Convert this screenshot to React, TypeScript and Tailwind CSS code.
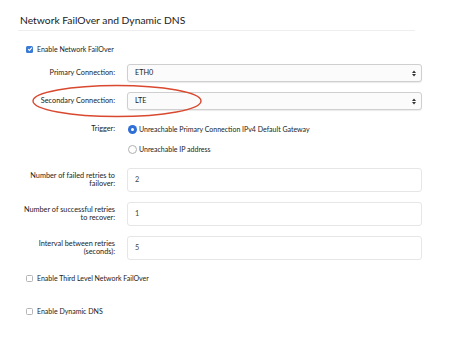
import React from "react";

const font = { fontFamily: "Lato, 'Noto Sans', sans-serif" };

const Checkbox = ({ checked, label }: { checked?: boolean; label: string }) => (
  <div className="flex items-center h-[10px] pl-[26px] gap-[4px]">
    {checked ? (
      <div className="w-[7px] h-[7px] rounded-[1.5px] bg-[#3a7bd5] flex items-center justify-center">
        <svg width="6" height="6" viewBox="0 0 10 10">
          <path d="M2 5.2 L4.2 7.3 L8 2.8" fill="none" stroke="white" strokeWidth="1.8" />
        </svg>
      </div>
    ) : (
      <div className="w-[7px] h-[7px] rounded-[1.5px] border border-[#b5b5b5] bg-white" />
    )}
    <span className="text-[7px] text-[#222]">{label}</span>
  </div>
);

const Label = ({ lines }: { lines: string[] }) => (
  <div className="w-[115px] text-right text-[7.3px] leading-[8.5px] text-[#222] shrink-0">
    {lines.map((l) => (
      <div key={l}>{l}</div>
    ))}
  </div>
);

const SelectRow = ({ label, value }: { label: string; value: string }) => (
  <div className="flex items-center gap-[12px] h-[18px] mt-[10px]">
    <Label lines={[label]} />
    <div className="w-[295px] h-[18px] border border-[#cfcfcf] rounded-[3px] bg-[#fbfbfb] shadow-[0_1px_1px_rgba(0,0,0,0.08)] flex items-center justify-between pl-[7px] pr-[5px]">
      <span className="text-[7.3px] text-[#222]">{value}</span>
      <svg width="4" height="7" viewBox="0 0 4 7">
        <path d="M0 3 L2 0.5 L4 3 Z M0 4 L2 6.5 L4 4 Z" fill="#333" />
      </svg>
    </div>
  </div>
);

const InputRow = ({ lines, value, mt }: { lines: string[]; value: string; mt: string }) => (
  <div className={`flex items-center gap-[12px] h-[24px] ${mt}`}>
    <Label lines={lines} />
    <div className="w-[295px] h-[24px] border border-[#e6e6e6] rounded-[3px] bg-white flex items-center pl-[7px]">
      <span className="text-[7.3px] text-[#444]">{value}</span>
    </div>
  </div>
);

const Radio = ({ checked, label }: { checked?: boolean; label: string }) => (
  <div className="flex items-center gap-[2px] h-[12px]">
    {checked ? (
      <div className="w-[9px] h-[9px] rounded-full bg-[#2f6fd6] flex items-center justify-center">
        <div className="w-[3px] h-[3px] rounded-full bg-white" />
      </div>
    ) : (
      <div className="w-[9px] h-[9px] rounded-full border border-[#b0b0b0] bg-white" />
    )}
    <span className="text-[7px] text-[#222]">{label}</span>
  </div>
);

export default function App() {
  return (
    <div className="relative w-[474px] h-[343px] bg-white overflow-hidden" style={font}>
      {/* Header */}
      <div className="ml-[18px] w-[397px] border-b border-[#eeeeee] pt-[13px] pb-[3px]">
        <div className="pl-[2px] text-[10.3px] leading-[14px] text-[#1a1a1a]">
          Network FailOver and Dynamic DNS
        </div>
      </div>

      <div className="mt-[13px]">
        <Checkbox checked label="Enable Network FailOver" />
      </div>

      <SelectRow label="Primary Connection:" value="ETH0" />
      <SelectRow label="Secondary Connection:" value="LTE" />

      {/* Trigger */}
      <div className="flex gap-[13px] mt-[13px]">
        <div className="w-[115px] h-[12px] flex items-center justify-end text-[7.3px] text-[#222] shrink-0">
          Trigger:
        </div>
        <div className="flex flex-col gap-[8px]">
          <Radio checked label="Unreachable Primary Connection IPv4 Default Gateway" />
          <Radio label="Unreachable IP address" />
        </div>
      </div>

      <InputRow lines={["Number of failed retries to", "failover:"]} value="2" mt="mt-[13px]" />
      <InputRow lines={["Number of successful retries", "to recover:"]} value="1" mt="mt-[10px]" />
      <InputRow lines={["Interval between retries", "(seconds):"]} value="5" mt="mt-[10px]" />

      <div className="mt-[13px]">
        <Checkbox label="Enable Third Level Network FailOver" />
      </div>
      <div className="mt-[23px]">
        <Checkbox label="Enable Dynamic DNS" />
      </div>

      {/* Red annotation ellipse */}
      <svg className="absolute left-0 top-0 pointer-events-none" width="474" height="343">
        <ellipse cx="117" cy="101" rx="84" ry="15.5" fill="none" stroke="#d9492f" strokeWidth="1.4" />
      </svg>
    </div>
  );
}
